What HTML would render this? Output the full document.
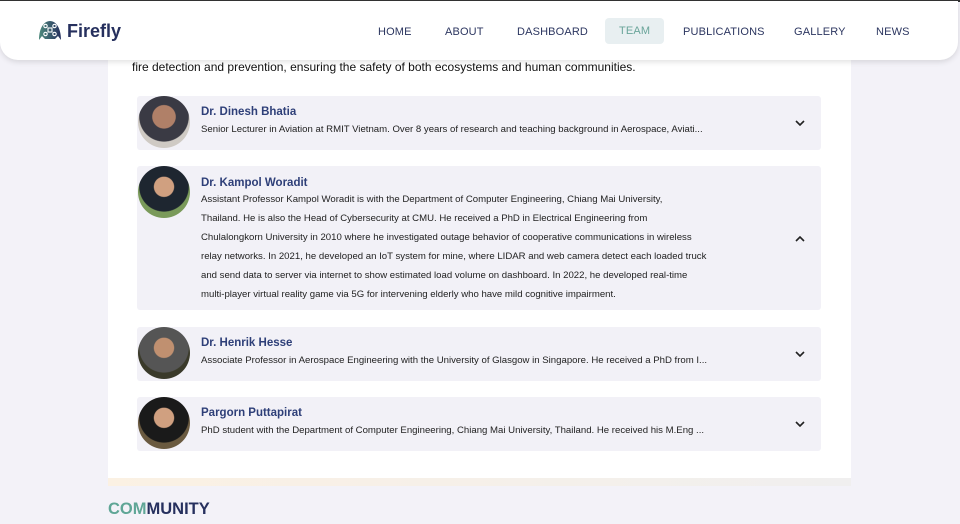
<!DOCTYPE html>
<html><head><meta charset="utf-8"><style>
*{box-sizing:border-box;margin:0;padding:0}
body{width:960px;height:524px;overflow:hidden;background:#f3f2f8;font-family:"Liberation Sans",Arial,sans-serif;position:relative}
.top{position:absolute;left:0;top:0;width:960px;height:2px;background:#333}
.hdr{position:absolute;left:0;top:1px;width:958px;height:59px;background:#fff;border-radius:0 0 18px 18px;box-shadow:0 2px 6px rgba(0,0,0,.12);z-index:2}
.logo{position:absolute;left:38px;top:19px;display:flex;align-items:center}
.logo span{font-weight:bold;font-size:18px;color:#26305e;margin-left:5px}
.nav{position:absolute;top:25px;font-size:11px;color:#2c3660;letter-spacing:.15px}
.team{background:#e8eff1;color:#6aa59a;border-radius:4px;padding:7px 14px;top:17px}
.panel{position:absolute;left:108px;top:40px;width:743px;height:438px;background:#fff}
.intro{position:absolute;left:132px;top:60px;font-size:12px;color:#111}
.card{position:absolute;left:137px;width:684px;background:#f2f1f7;border-radius:3px}
.av{position:absolute;left:1px;width:52px;height:52px;border-radius:50%}
.nm{position:absolute;left:64px;font-weight:bold;font-size:11.5px;color:#2e3f78}
.ds{position:absolute;left:64px;font-size:9.6px;color:#222;line-height:19px;width:560px;white-space:nowrap}
.chev{position:absolute;right:16px;width:10px;height:6px}
.strip{position:absolute;left:108px;top:478px;width:743px;height:8px;background:linear-gradient(90deg,#fbf1e3,#f0efef)}
.comm{position:absolute;left:108px;top:500px;font-weight:bold;font-size:16.5px;color:#26305e}
</style></head><body>
<div class="top"></div>
<div class="panel"></div>
<div class="intro">fire detection and prevention, ensuring the safety of both ecosystems and human communities.</div>
<div class="hdr">
 <div class="logo"><svg width="24" height="22" viewBox="0 0 24 22"><defs><linearGradient id="g" x1="0" x2="1"><stop offset="0" stop-color="#4f8a7d"/><stop offset="1" stop-color="#26305e"/></linearGradient></defs><path d="M1 20 C1 8 6 1 12 1 C18 1 23 8 23 20 L20 16 L17 19 L7 19 L4 16 Z" fill="url(#g)"/><g stroke="#fff" stroke-width="1.1" fill="none"><rect x="10" y="8" width="4" height="4"/><circle cx="7.5" cy="6" r="1.7"/><circle cx="16.5" cy="6" r="1.7"/><circle cx="7.5" cy="14" r="1.7"/><circle cx="16.5" cy="14" r="1.7"/></g></svg><span>Firefly</span></div>
 <div class="nav" style="left:378px">HOME</div>
 <div class="nav" style="left:445px">ABOUT</div>
 <div class="nav" style="left:517px">DASHBOARD</div>
 <div class="nav team" style="left:605px">TEAM</div>
 <div class="nav" style="left:683px">PUBLICATIONS</div>
 <div class="nav" style="left:794px">GALLERY</div>
 <div class="nav" style="left:876px">NEWS</div>
</div>

<div class="card" style="top:96px;height:54px"><div class="av" style="top:0;background:radial-gradient(circle at 50% 40%,#b08068 0 28%,#3a3a44 30% 60%,#cfcac4 62%)"></div>
<div class="nm" style="top:10px">Dr. Dinesh Bhatia</div><div class="ds" style="top:24px">Senior Lecturer in Aviation at RMIT Vietnam. Over 8 years of research and teaching background in Aerospace, Aviati...</div>
<svg class="chev" style="top:24px" viewBox="0 0 10 6"><path d="M1 1l4 4 4-4" stroke="#222" stroke-width="1.6" fill="none"/></svg></div>

<div class="card" style="top:166px;height:144px"><div class="av" style="top:0;background:radial-gradient(circle at 50% 40%,#d0a080 0 24%,#1e2630 26% 60%,#7a9a5a 62%)"></div>
<div class="nm" style="top:11px">Dr. Kampol Woradit</div><div class="ds" style="top:24px">Assistant Professor Kampol Woradit is with the Department of Computer Engineering, Chiang Mai University,<br>Thailand. He is also the Head of Cybersecurity at CMU. He received a PhD in Electrical Engineering from<br>Chulalongkorn University in 2010 where he investigated outage behavior of cooperative communications in wireless<br>relay networks. In 2021, he developed an IoT system for mine, where LIDAR and web camera detect each loaded truck<br>and send data to server via internet to show estimated load volume on dashboard. In 2022, he developed real-time<br>multi-player virtual reality game via 5G for intervening elderly who have mild cognitive impairment.</div>
<svg class="chev" style="top:70px" viewBox="0 0 10 6"><path d="M1 5l4-4 4 4" stroke="#222" stroke-width="1.6" fill="none"/></svg></div>

<div class="card" style="top:327px;height:54px"><div class="av" style="top:0;background:radial-gradient(circle at 50% 40%,#c09070 0 24%,#555 26% 60%,#3a3a2a 62%)"></div>
<div class="nm" style="top:10px">Dr. Henrik Hesse</div><div class="ds" style="top:24px">Associate Professor in Aerospace Engineering with the University of Glasgow in Singapore. He received a PhD from I...</div>
<svg class="chev" style="top:24px" viewBox="0 0 10 6"><path d="M1 1l4 4 4-4" stroke="#222" stroke-width="1.6" fill="none"/></svg></div>

<div class="card" style="top:397px;height:54px"><div class="av" style="top:0;background:radial-gradient(circle at 50% 40%,#d0a080 0 24%,#1a1a1a 26% 60%,#6a5a40 62%)"></div>
<div class="nm" style="top:10px">Pargorn Puttapirat</div><div class="ds" style="top:24px">PhD student with the Department of Computer Engineering, Chiang Mai University, Thailand. He received his M.Eng ...</div>
<svg class="chev" style="top:24px" viewBox="0 0 10 6"><path d="M1 1l4 4 4-4" stroke="#222" stroke-width="1.6" fill="none"/></svg></div>

<div class="strip"></div>
<div class="comm"><span style="color:#5fa696">COM</span>MUNITY</div>
</body></html>
